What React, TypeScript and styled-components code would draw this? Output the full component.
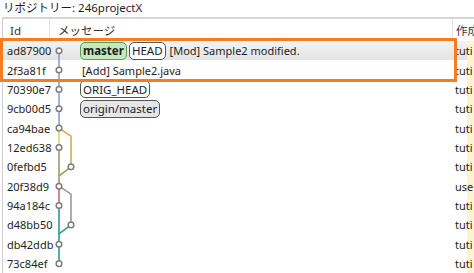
import React from 'react';
import styled, { createGlobalStyle } from 'styled-components';

const GlobalStyle = createGlobalStyle`
  body {
    margin: 0;
    background: #fff;
    font-family: "Noto Sans", "Noto Sans CJK JP", sans-serif;
    font-size: 11px;
    color: #1e1e1e;
  }
`;

const ROW_H = 19.36;
const MAIN_X = 9;
const SIDE_X = 21;

const Page = styled.div`
  position: relative;
  width: 474px;
  height: 273px;
  overflow: hidden;
`;

const Title = styled.div`
  height: 17px;
  line-height: 16px;
  padding-left: 3px;
  font-size: 11.5px;
`;

const Panel = styled.div`
  margin-left: 2px;
  border-top: 2px solid #d6d6d6;
  border-left: 1px solid #cfcfcf;
`;

const HeaderRow = styled.div`
  display: grid;
  grid-template-columns: 47px 403px 1fr;
  height: 22px;
`;

const HeaderCell = styled.div<{ $pad: number; $divider?: boolean }>`
  display: flex;
  align-items: center;
  overflow: hidden;
  padding-left: ${(p) => p.$pad}px;
  border-right: ${(p) => (p.$divider ? '1px solid #e2e2e2' : 'none')};
  font-size: 11.5px;
  color: #333;
  white-space: nowrap;
`;

const Body = styled.div`
  position: relative;
`;

const Row = styled.div<{ $selected?: boolean }>`
  display: grid;
  grid-template-columns: 47px 403px 1fr;
  height: ${ROW_H}px;
  background: ${(p) =>
    p.$selected ? 'linear-gradient(#f3f3f3, #e3e3e3)' : 'transparent'};
`;

const IdCell = styled.div`
  display: flex;
  align-items: center;
  padding-left: 4px;
  white-space: nowrap;
`;

const MsgCell = styled.div`
  display: flex;
  align-items: center;
  gap: 2px;
  padding-left: 30px;
  white-space: nowrap;
`;

const AuthorCell = styled.div`
  display: flex;
  align-items: center;
  overflow: hidden;
  padding-left: 2px;
  background: linear-gradient(to right, transparent 14px, #fbf3d2 14px);
  white-space: nowrap;
`;

const Badge = styled.span<{ $kind: 'branch' | 'head' | 'remote' }>`
  display: inline-flex;
  align-items: center;
  height: 16px;
  padding: 0 2px;
  border-radius: 5px;
  border: 1px solid ${(p) => (p.$kind === 'branch' ? '#5c9a5c' : '#555')};
  background: ${(p) =>
    p.$kind === 'branch' ? '#c6e8c0' : p.$kind === 'remote' ? '#e6e6e6' : '#fff'};
  font-weight: ${(p) => (p.$kind === 'branch' ? 700 : 400)};
  font-size: 11.5px;
  color: #1e1e1e;
`;

const MsgText = styled.span`
  margin-left: 2px;
`;

const Graph = styled.svg`
  position: absolute;
  left: 47px;
  top: 0;
  pointer-events: none;
`;

const Highlight = styled.div`
  position: absolute;
  left: 0;
  top: 37.5px;
  width: 457px;
  height: 44.5px;
  box-sizing: border-box;
  border: 3.5px solid #f47d22;
  pointer-events: none;
`;

type Ref = { label: string; kind: 'branch' | 'head' | 'remote' };
type Commit = { id: string; refs?: Ref[]; msg?: string; author: string; side?: boolean };

const commits: Commit[] = [
  {
    id: 'ad87900',
    refs: [
      { label: 'master', kind: 'branch' },
      { label: 'HEAD', kind: 'head' },
    ],
    msg: '[Mod] Sample2 modified.',
    author: 'tuti',
  },
  { id: '2f3a81f', msg: '[Add] Sample2.java', author: 'tuti' },
  { id: '70390e7', refs: [{ label: 'ORIG_HEAD', kind: 'head' }], author: 'tuti' },
  { id: '9cb00d5', refs: [{ label: 'origin/master', kind: 'remote' }], author: 'tuti' },
  { id: 'ca94bae', author: 'tuti' },
  { id: '12ed638', author: 'tuti' },
  { id: '0fefbd5', author: 'tuti', side: true },
  { id: '20f38d9', author: 'use' },
  { id: '94a184c', author: 'tuti' },
  { id: 'd48bb50', author: 'tuti', side: true },
  { id: 'db42ddb', author: 'tuti' },
  { id: '73c84ef', author: 'tuti' },
];

const cy = (i: number) => ROW_H / 2 + ROW_H * i;

const CommitGraph: React.FC = () => {
  const h = ROW_H * commits.length;
  return (
    <Graph width={32} height={h} viewBox={`0 0 32 ${h}`}>
      <g fill="none" strokeWidth={1.6}>
        <line x1={MAIN_X} y1={cy(0)} x2={MAIN_X} y2={cy(4)} stroke="#8b9fd2" />
        <line x1={MAIN_X} y1={cy(4)} x2={MAIN_X} y2={cy(5)} stroke="#dcd46a" />
        <line x1={MAIN_X} y1={cy(5)} x2={MAIN_X} y2={cy(7)} stroke="#9a9c68" />
        <polyline
          points={`${MAIN_X},${cy(4)} ${SIDE_X},${cy(4) + 8} ${SIDE_X},${cy(6)}`}
          stroke="#dea456"
        />
        <line x1={SIDE_X} y1={cy(6)} x2={MAIN_X} y2={cy(6) + 9} stroke="#8fa25a" />
        <line x1={MAIN_X} y1={cy(7)} x2={MAIN_X} y2={cy(8)} stroke="#c86a6a" />
        <polyline
          points={`${MAIN_X},${cy(7)} ${SIDE_X},${cy(7) + 8} ${SIDE_X},${cy(9)}`}
          stroke="#9a9a9a"
        />
        <line x1={MAIN_X} y1={cy(8)} x2={MAIN_X} y2={cy(11)} stroke="#2a9a92" />
        <line x1={SIDE_X} y1={cy(9)} x2={MAIN_X} y2={cy(9) + 9} stroke="#2a9a92" />
      </g>
      {commits.map((c, i) => (
        <circle
          key={c.id}
          cx={c.side ? SIDE_X : MAIN_X}
          cy={cy(i)}
          r={2.8}
          fill="#fff"
          stroke="#7c7c7c"
          strokeWidth={1.5}
        />
      ))}
    </Graph>
  );
};

export default function App() {
  return (
    <Page>
      <GlobalStyle />
      <Title>リポジトリー: 246projectX</Title>
      <Panel>
        <HeaderRow>
          <HeaderCell $pad={7} $divider>
            Id
          </HeaderCell>
          <HeaderCell $pad={8} $divider>
            メッセージ
          </HeaderCell>
          <HeaderCell $pad={3}>作成</HeaderCell>
        </HeaderRow>
        <Body>
          {commits.map((c, i) => (
            <Row key={c.id} $selected={i === 0}>
              <IdCell>{c.id}</IdCell>
              <MsgCell>
                {c.refs?.map((r) => (
                  <Badge key={r.label} $kind={r.kind}>
                    {r.label}
                  </Badge>
                ))}
                {c.msg && <MsgText>{c.msg}</MsgText>}
              </MsgCell>
              <AuthorCell>{c.author}</AuthorCell>
            </Row>
          ))}
          <CommitGraph />
        </Body>
      </Panel>
      <Highlight />
    </Page>
  );
}
